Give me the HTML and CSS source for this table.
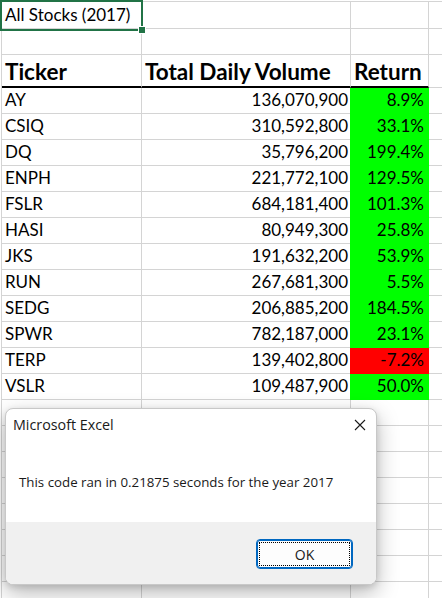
FILE: index.html
```html
<!DOCTYPE html>
<html>
<head>
<meta charset="utf-8">
<link rel="stylesheet" href="styles.css">
</head>
<body>
<div class="sheet">
  <div class="cell a">All Stocks (2017)</div><div class="cell"></div><div class="cell"></div><div class="cell d"></div>
  <div class="cell"></div><div class="cell"></div><div class="cell"></div><div class="cell d"></div>
  <div class="cell hd">Ticker</div><div class="cell hd">Total Daily Volume</div><div class="cell hd">Return</div><div class="cell d"></div>

  <div class="cell a">AY</div><div class="cell num">136,070,900</div><div class="cell num up">8.9%</div><div class="cell d"></div>
  <div class="cell a">CSIQ</div><div class="cell num">310,592,800</div><div class="cell num up">33.1%</div><div class="cell d"></div>
  <div class="cell a">DQ</div><div class="cell num">35,796,200</div><div class="cell num up">199.4%</div><div class="cell d"></div>
  <div class="cell a">ENPH</div><div class="cell num">221,772,100</div><div class="cell num up">129.5%</div><div class="cell d"></div>
  <div class="cell a">FSLR</div><div class="cell num">684,181,400</div><div class="cell num up">101.3%</div><div class="cell d"></div>
  <div class="cell a">HASI</div><div class="cell num">80,949,300</div><div class="cell num up">25.8%</div><div class="cell d"></div>
  <div class="cell a">JKS</div><div class="cell num">191,632,200</div><div class="cell num up">53.9%</div><div class="cell d"></div>
  <div class="cell a">RUN</div><div class="cell num">267,681,300</div><div class="cell num up">5.5%</div><div class="cell d"></div>
  <div class="cell a">SEDG</div><div class="cell num">206,885,200</div><div class="cell num up">184.5%</div><div class="cell d"></div>
  <div class="cell a">SPWR</div><div class="cell num">782,187,000</div><div class="cell num up">23.1%</div><div class="cell d"></div>
  <div class="cell a">TERP</div><div class="cell num">139,402,800</div><div class="cell num down">-7.2%</div><div class="cell d"></div>
  <div class="cell a">VSLR</div><div class="cell num">109,487,900</div><div class="cell num up">50.0%</div><div class="cell d"></div>

  <div class="cell"></div><div class="cell"></div><div class="cell"></div><div class="cell d"></div>
  <div class="cell"></div><div class="cell"></div><div class="cell"></div><div class="cell d"></div>
  <div class="cell"></div><div class="cell"></div><div class="cell"></div><div class="cell d"></div>
  <div class="cell"></div><div class="cell"></div><div class="cell"></div><div class="cell d"></div>
  <div class="cell"></div><div class="cell"></div><div class="cell"></div><div class="cell d"></div>
  <div class="cell"></div><div class="cell"></div><div class="cell"></div><div class="cell d"></div>
  <div class="cell"></div><div class="cell"></div><div class="cell"></div><div class="cell d"></div>
  <div class="cell"></div><div class="cell"></div><div class="cell"></div><div class="cell d"></div>
</div>
<div class="selection"><span class="handle"></span></div>

<div class="dialog">
  <div class="dlg-title">
    <span>Microsoft Excel</span>
    <svg class="close" width="12" height="12" viewBox="0 0 12 12"><path d="M1 1 L11 11 M11 1 L1 11" stroke="#1a1a1a" stroke-width="1.1" fill="none"/></svg>
  </div>
  <div class="dlg-body">This code ran in 0.21875 seconds for the year 2017</div>
  <div class="dlg-foot">
    <button class="ok"><span class="focus">OK</span></button>
  </div>
</div>
</body>
</html>
```

FILE: styles.css
```css
* { box-sizing: border-box; }
html, body { margin: 0; padding: 0; background: #fff; overflow: hidden; }
body { width: 442px; height: 598px; position: relative; font-family: Lato, "Noto Sans", sans-serif; color: #000; }

.sheet {
  display: grid;
  grid-template-columns: 140px 209px 78px 1fr;
  grid-template-rows: 27px 26px 33px;
  grid-auto-rows: 26px;
  margin: 1px 0 0 1px;
  border-left: 1px solid #d4d4d4;
  border-top: 1px solid #d4d4d4;
}
.cell {
  border-right: 1px solid #d4d4d4;
  border-bottom: 1px solid #d4d4d4;
  font-size: 17px;
  display: flex;
  align-items: flex-end;
  padding: 0 3px 3px 3px;
  white-space: nowrap;
}
.cell.d { border-right: none; }
.cell.hd {
  border-bottom: 2px solid #000;
  font-weight: 700;
  font-size: 22.5px;
  padding-bottom: 1px;
}
.cell.num { justify-content: flex-end; padding-right: 2px; }
.cell.up { background: #00ff00; border-right-color: #00ff00; border-bottom-color: #00ff00; padding-right: 4px; box-shadow: -1px 0 0 #00ff00; }
.cell.down { background: #ff0000; border-right-color: #ff0000; border-bottom-color: #ff0000; padding-right: 4px; box-shadow: -1px 0 0 #ff0000; }

.selection {
  position: absolute;
  left: 0; top: 0;
  width: 143px; height: 31px;
  border: 2px solid #217346;
}
.handle {
  position: absolute;
  right: -4px; bottom: -4px;
  width: 6px; height: 6px;
  background: #217346;
  box-shadow: 0 0 0 1px #fff;
}

.dialog {
  position: absolute;
  left: 5px; top: 408px;
  width: 372px; height: 177px;
  background: #fff;
  border: 1px solid #c8c8c8;
  border-radius: 8px;
  box-shadow: 0 8px 22px rgba(0,0,0,0.28), 0 2px 6px rgba(0,0,0,0.12);
  font-family: "Open Sans", "Noto Sans", sans-serif;
  font-size: 13.3px;
  color: #1a1a1a;
  display: flex;
  flex-direction: column;
  overflow: hidden;
}
.dlg-title {
  height: 31px;
  display: flex;
  align-items: center;
  justify-content: space-between;
  padding: 0 10px 0 7px;
  font-size: 14.3px;
}
.close { display: block; }
.dlg-body {
  flex: 1;
  padding: 33px 0 0 13px;
}
.dlg-foot {
  height: 62px;
  background: #f0f0f0;
  display: flex;
  justify-content: flex-end;
  align-items: flex-start;
  padding: 17px 23px 0 0;
}
.ok {
  width: 97px; height: 30px;
  background: #fdfdfd;
  border: 1px solid #0067c0;
  box-shadow: inset 0 0 0 1px #0067c0;
  border-radius: 4px;
  padding: 2px;
  font-family: "Open Sans", "Noto Sans", sans-serif;
  font-size: 14px;
  color: #1a1a1a;
  display: flex;
}
.focus {
  flex: 1;
  border: 1px dotted #000;
  display: flex;
  align-items: center;
  justify-content: center;
}
```
